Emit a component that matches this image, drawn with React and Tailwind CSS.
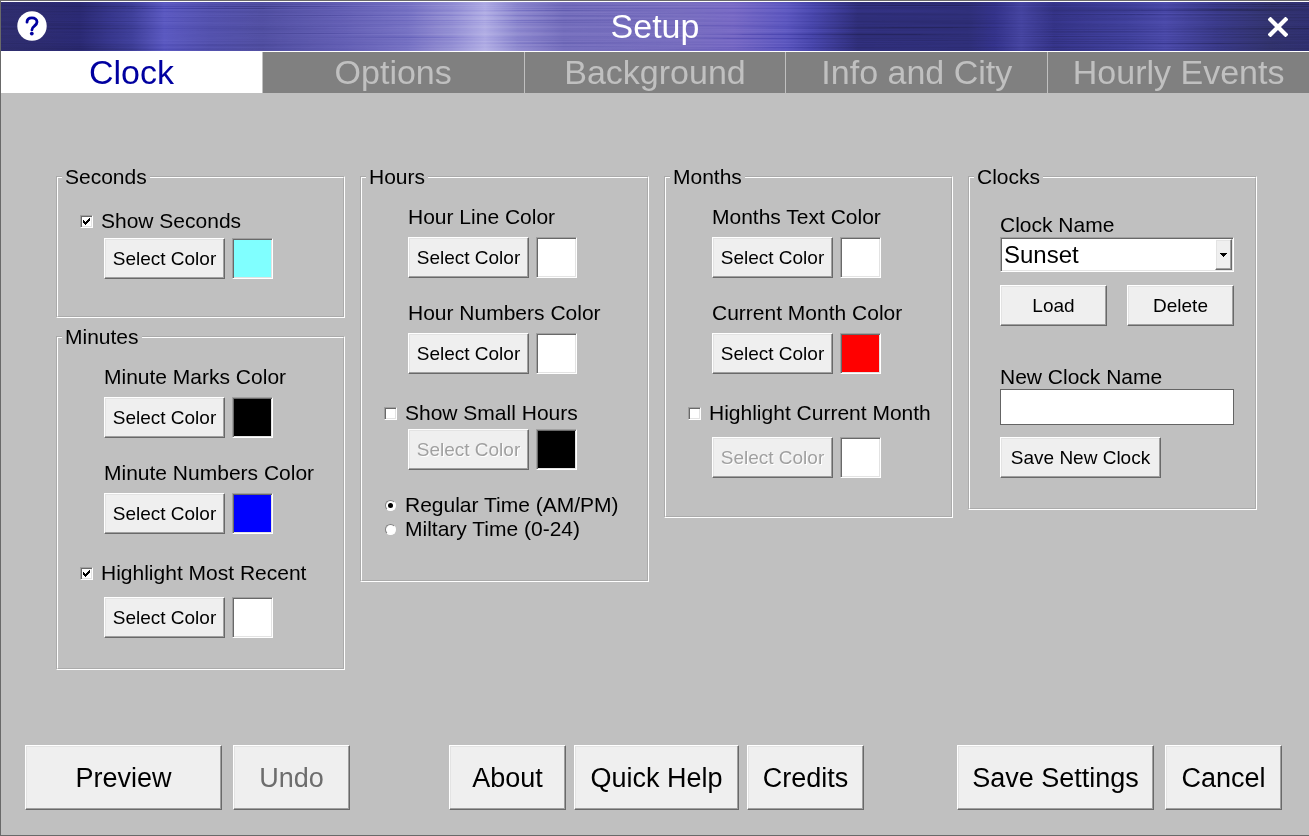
import React, { useState } from 'react'
import clsx from 'clsx'

const tabs = ['Clock', 'Options', 'Background', 'Info and City', 'Hourly Events']

const bevel =
  'bg-[#efefef] border border-t-white border-l-white border-r-[#696969] border-b-[#696969] shadow-[inset_-1px_-1px_0_#a0a0a0,inset_1px_1px_0_#e3e3e3]'
const sunken =
  'border border-t-[#a0a0a0] border-l-[#a0a0a0] border-r-white border-b-white shadow-[inset_1px_1px_0_#696969,inset_-1px_-1px_0_#e3e3e3]'

function Button({ className, children, ...props }) {
  return (
    <button
      type="button"
      className={clsx(bevel, 'h-[41px] pt-0.5 text-[19px] whitespace-nowrap disabled:text-[#a0a0a0] disabled:[text-shadow:1px_1px_0_#fff]', className)}
      {...props}
    >
      {children}
    </button>
  )
}

function BigButton({ className, children, ...props }) {
  return (
    <button
      type="button"
      className={clsx(bevel, 'h-[65px] pt-0.5 text-[27px] whitespace-nowrap disabled:text-[#6d6d6d]', className)}
      {...props}
    >
      {children}
    </button>
  )
}

function Group({ title, className, children }) {
  return (
    <fieldset className="min-w-0 border-2 border-white [border-style:groove]">
      <legend className="ml-1 px-[3px] leading-6">{title}</legend>
      <div className={className}>{children}</div>
    </fieldset>
  )
}

function ColorPicker({ label, color, disabled, className }) {
  return (
    <div className={clsx('ml-6 flex gap-[7px]', className)}>
      <Button className="w-[121px]" disabled={disabled} aria-label={`Select Color, ${label}`}>
        Select Color
      </Button>
      <span className={clsx('size-[41px]', sunken, color)} />
    </div>
  )
}

function ColorField({ label, color, className }) {
  return (
    <div className={className}>
      <p className="ml-6 leading-6 whitespace-nowrap">{label}</p>
      <ColorPicker label={label} color={color} className="mt-2" />
    </div>
  )
}

function Checkbox({ label, checked, onChange, className }) {
  return (
    <label className={clsx('flex items-center gap-2 leading-6 whitespace-nowrap', className)}>
      <span className="relative size-[13px]">
        <input
          type="checkbox"
          checked={checked}
          onChange={(e) => onChange(e.target.checked)}
          className={clsx('peer block size-[13px] appearance-none bg-white', sunken)}
        />
        <svg
          className="pointer-events-none absolute inset-0 hidden size-[13px] peer-checked:block"
          viewBox="0 0 13 13"
          shapeRendering="crispEdges"
        >
          <path d="M3 5v3l2 2 5-5V2L5 7z" fill="#000" />
        </svg>
      </span>
      {label}
    </label>
  )
}

function Radio({ label, checked, onChange }) {
  return (
    <label className="flex items-center gap-2 leading-6 whitespace-nowrap">
      <span className="relative size-[13px] p-px">
        <input
          type="radio"
          name="time-format"
          checked={checked}
          onChange={onChange}
          className="peer block size-[11px] appearance-none rounded-full border border-t-[#808080] border-r-white border-b-white border-l-[#808080] bg-white"
        />
        <span className="pointer-events-none absolute inset-0 m-auto hidden size-[5px] rounded-full bg-black peer-checked:block" />
      </span>
      {label}
    </label>
  )
}

function TitleBar() {
  return (
    <header className="relative flex h-[51px] items-center justify-between border-y border-white bg-[linear-gradient(90deg,#2b2a66_0%,#27266a_6%,#3a3a90_10%,#5452bb_12.5%,#4d4ba6_16%,#4b499a_20%,#5c58ae_26%,#6d69be_31%,#8a85d0_34.5%,#a9a5e2_37%,#827dca_39.5%,#6b65b6_43%,#6f66ba_52%,#6f62c0_56%,#5752bb_60%,#4442a6_62%,#2c2b72_65.5%,#2b2b70_74%,#302f80_76%,#403f98_78%,#302f7c_80.5%,#3a3a90_86%,#4443a0_89%,#35357e_93%,#2e2f66_97%,#2c2c68_100%)] px-4 pb-0.5">
      {/* brushed metal grain */}
      <svg className="pointer-events-none absolute inset-0 size-full opacity-15 mix-blend-overlay" aria-hidden="true">
        <filter id="grain" x="0" y="0" width="100%" height="100%">
          <feTurbulence type="fractalNoise" baseFrequency="0.003 0.9" numOctaves="2" seed="4" />
          <feColorMatrix type="matrix" values="2 0 0 0 -0.5  2 0 0 0 -0.5  2 0 0 0 -0.5  0 0 0 0 1" />
        </filter>
        <rect width="100%" height="100%" filter="url(#grain)" />
      </svg>
      <button type="button" aria-label="Help" className="relative">
        <svg width="30" height="30" viewBox="0 0 30 30" fill="none">
          <circle cx="15" cy="15" r="14.7" fill="#fff" />
          <path
            d="M10 11.2C10 8.3 12 6.9 14.9 6.9c3 0 5.100 1.700 5.100 4.200 0 2-1.200 2.900-2.600 3.900-1.500 1.100-2.500 1.800-2.500 3.900"
            stroke="#0000a0"
            strokeWidth="2.8"
            strokeLinecap="round"
          />
          <circle cx="14.8" cy="22.6" r="1.9" fill="#0000a0" />
        </svg>
      </button>
      <h1 className="relative text-[34px] leading-none text-white">Setup</h1>
      <button type="button" aria-label="Close" className="relative flex w-[30px] justify-center pt-0.5">
        <svg width="20" height="20" viewBox="0 0 20 20">
          <path d="M2.500 2.500l15 15M17.500 2.500l-15 15" stroke="#fff" strokeWidth="4.2" strokeLinecap="square" />
        </svg>
      </button>
    </header>
  )
}

function App() {
  const [tab, setTab] = useState('Clock')
  const [showSeconds, setShowSeconds] = useState(true)
  const [highlightRecent, setHighlightRecent] = useState(true)
  const [smallHours, setSmallHours] = useState(false)
  const [highlightMonth, setHighlightMonth] = useState(false)
  const [military, setMilitary] = useState(false)
  const [clockName, setClockName] = useState('Sunset')
  const [newName, setNewName] = useState('')

  return (
    <div className="flex min-h-screen flex-col border-t border-b border-l border-[#696969] bg-[#c0c0c0] font-['Liberation_Sans',Arial,sans-serif] text-[21px] text-black">
      <TitleBar />

      <nav className="flex h-[41px] gap-px bg-[#c0c0c0]">
        {tabs.map((name) => (
          <button
            key={name}
            type="button"
            onClick={() => setTab(name)}
            className={clsx(
              'flex-1 text-[34px] leading-[41px] whitespace-nowrap',
              tab === name ? 'bg-white text-[#0000a0]' : 'bg-[#808080] text-[#c0c0c0]'
            )}
          >
            {name}
          </button>
        ))}
      </nav>

      <main className="grid grid-cols-4 items-start gap-[15px] pt-[72px] pr-[52px] pb-8 pl-[55px]">
        <div className="flex min-w-0 flex-col gap-[7px]">
          <Group title="Seconds" className="pt-5 pb-[37px] pl-[22px]">
            <Checkbox label="Show Seconds" checked={showSeconds} onChange={setShowSeconds} />
            <ColorPicker className="mt-[5px]" label="Seconds" color="bg-[#80ffff]" disabled={!showSeconds} />
          </Group>

          <Group title="Minutes" className="pt-4 pb-[30px] pl-[22px]">
            <ColorField label="Minute Marks Color" color="bg-black" />
            <ColorField className="mt-[23px]" label="Minute Numbers Color" color="bg-[#0000ff]" />
            <Checkbox className="mt-[27px]" label="Highlight Most Recent" checked={highlightRecent} onChange={setHighlightRecent} />
            <ColorPicker className="mt-3" label="Highlight Most Recent" color="bg-white" disabled={!highlightRecent} />
          </Group>
        </div>

        <Group title="Hours" className="pt-4 pb-[39px] pl-[22px]">
          <ColorField label="Hour Line Color" color="bg-white" />
          <ColorField className="mt-[23px]" label="Hour Numbers Color" color="bg-white" />
          <Checkbox className="mt-[27px]" label="Show Small Hours" checked={smallHours} onChange={setSmallHours} />
          <ColorPicker className="mt-1" label="Small Hours" color="bg-black" disabled={!smallHours} />
          <div className="mt-[23px]">
            <Radio label="Regular Time (AM/PM)" checked={!military} onChange={() => setMilitary(false)} />
            <Radio label="Miltary Time (0-24)" checked={military} onChange={() => setMilitary(true)} />
          </div>
        </Group>

        <Group title="Months" className="pt-4 pb-[38px] pl-[22px]">
          <ColorField label="Months Text Color" color="bg-white" />
          <ColorField className="mt-[23px]" label="Current Month Color" color="bg-[#ff0000]" />
          <Checkbox className="mt-[27px]" label="Highlight Current Month" checked={highlightMonth} onChange={setHighlightMonth} />
          <ColorPicker className="mt-3" label="Highlight Current Month" color="bg-white" disabled={!highlightMonth} />
        </Group>

        <Group title="Clocks" className="pt-6 pr-[21px] pb-[30px] pl-[30px]">
          <label htmlFor="clock-name" className="block leading-6">
            Clock Name
          </label>
          <div className="relative">
            <select
              id="clock-name"
              value={clockName}
              onChange={(e) => setClockName(e.target.value)}
              className={clsx('block h-[35px] w-full appearance-none bg-white pr-5 pl-[3px] text-[24px] leading-8', sunken)}
            >
              <option>Sunset</option>
            </select>
            <span className={clsx('pointer-events-none absolute inset-y-0.5 right-0.5 flex w-[17px] items-center justify-center', bevel)}>
              <svg width="7" height="4" viewBox="0 0 7 4" shapeRendering="crispEdges">
                <path d="M0 0h7L3.5 4z" fill="#000" />
              </svg>
            </span>
          </div>
          <div className="mt-[13px] flex justify-between">
            <Button className="w-[107px]">Load</Button>
            <Button className="w-[107px]">Delete</Button>
          </div>
          <label htmlFor="new-clock-name" className="mt-[39px] block leading-6">
            New Clock Name
          </label>
          <input
            id="new-clock-name"
            type="text"
            value={newName}
            onChange={(e) => setNewName(e.target.value)}
            className="block h-9 w-full border border-[#646464] bg-white px-1 text-[24px]"
          />
          <Button className="mt-3 w-[161px]">Save New Clock</Button>
        </Group>
      </main>

      <footer className="mt-auto flex justify-between pr-[27px] pb-[25px] pl-6">
        <div className="flex gap-[11px]">
          <BigButton className="w-[197px]">Preview</BigButton>
          <BigButton className="w-[117px]" disabled>
            Undo
          </BigButton>
        </div>
        <div className="flex gap-2 pl-1.5">
          <BigButton className="w-[117px]">About</BigButton>
          <BigButton className="w-[165px]">Quick Help</BigButton>
          <BigButton className="w-[117px]">Credits</BigButton>
        </div>
        <div className="flex gap-[11px]">
          <BigButton className="w-[197px]">Save Settings</BigButton>
          <BigButton className="w-[117px]">Cancel</BigButton>
        </div>
      </footer>
    </div>
  )
}

export default App
